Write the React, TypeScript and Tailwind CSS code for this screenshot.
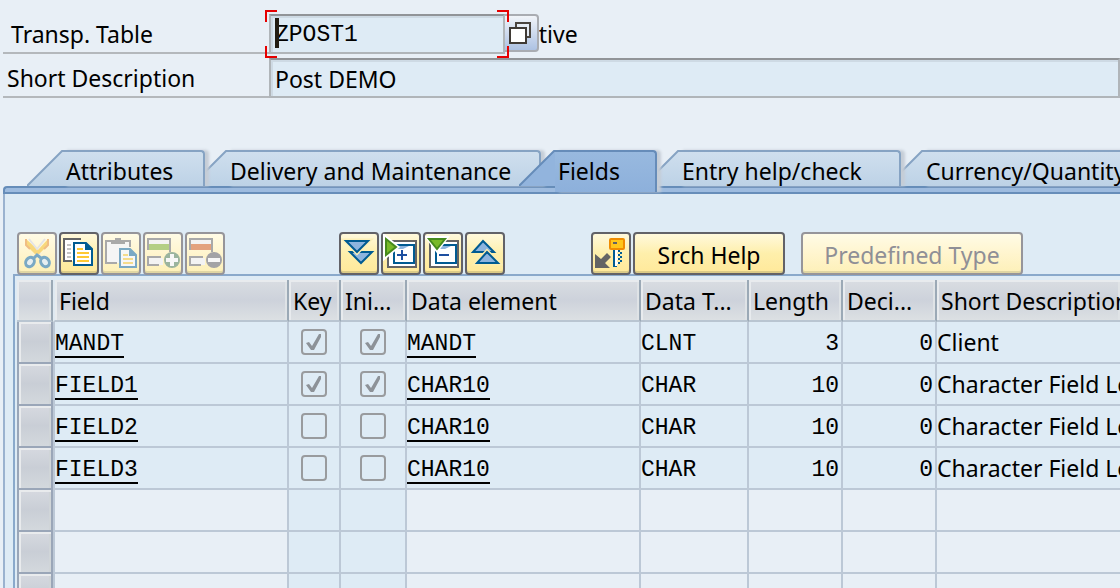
import React from 'react';
import clsx from 'clsx';

const tabs = [
  { label: 'Attributes', className: 'ml-6 z-40', width: 'w-[142px]' },
  { label: 'Delivery and Maintenance', className: '-ml-[14px] z-30', width: 'w-[314px]' },
  { label: 'Fields', className: '-ml-[22px] z-50', width: 'w-[102px]', active: true },
  { label: 'Entry help/check', className: '-ml-[14px] z-20', width: 'w-[222px]' },
  { label: 'Currency/Quantity', className: '-ml-[14px] z-10', width: 'w-[314px]' },
];

const columns = [
  { label: 'Field', width: 'w-[236px]' },
  { label: 'Key', width: 'w-[52px]' },
  { label: 'Ini...', width: 'w-[66px]' },
  { label: 'Data element', width: 'w-[234px]' },
  { label: 'Data T...', width: 'w-[108px]' },
  { label: 'Length', width: 'w-[94px]' },
  { label: 'Deci...', width: 'w-[94px]' },
  { label: 'Short Description', width: '' },
];

const rows = [
  { field: 'MANDT', key: true, element: 'MANDT', type: 'CLNT', length: 3, decimals: 0, desc: 'Client' },
  { field: 'FIELD1', key: true, element: 'CHAR10', type: 'CHAR', length: 10, decimals: 0, desc: 'Character Field Le' },
  { field: 'FIELD2', key: false, element: 'CHAR10', type: 'CHAR', length: 10, decimals: 0, desc: 'Character Field Le' },
  { field: 'FIELD3', key: false, element: 'CHAR10', type: 'CHAR', length: 10, decimals: 0, desc: 'Character Field Le' },
];

const MONO = "font-['Liberation_Mono',monospace] leading-6";

const Icon: React.FC<{ children: React.ReactNode }> = ({ children }) => (
  <svg viewBox="2 2 36 39" className="w-9 h-[39px] block" fill="none" aria-hidden="true">
    {children}
  </svg>
);

const CutIcon = () => (
  <Icon>
    <path d="M18 21l3-4 3 4-3 4z" fill="#e9e9ec" />
    <path d="M9 7v6l9 9h4l9-9V7l-10 11z" fill="#f8d87c" />
    <path d="M9 7v6l4 4M31 7v6l-4 4" stroke="#f0bd84" strokeWidth="2" />
    <path d="M12 7l8 10 8-10" stroke="#e4e4e6" strokeWidth="2" />
    <path d="M17 26l3-3 4 3" stroke="#7aa9c4" strokeWidth="3" />
    <ellipse cx="13" cy="30" rx="4" ry="5" transform="rotate(35 13 30)" fill="#e6eef1" stroke="#7aa9c4" strokeWidth="3" />
    <ellipse cx="28" cy="30" rx="4" ry="5" transform="rotate(-35 28 30)" fill="#e6eef1" stroke="#7aa9c4" strokeWidth="3" />
  </Icon>
);

const CopyIcon = () => (
  <Icon>
    <path d="M5 7h16v22H5z" fill="#fff" />
    <path d="M22 7H5v22h8" stroke="#646464" strokeWidth="2" />
    <path d="M8 13h4M8 17h4M8 21h4M8 25h4" stroke="#c4c4c4" strokeWidth="2" />
    <path d="M15 11h12l6 6v16H15z" fill="#fff" stroke="#005b92" strokeWidth="2" />
    <path d="M26 10l8 8h-8z" fill="#005b92" />
    <path d="M18 17h6M18 21h12M18 25h12M18 29h12" stroke="#ffc933" strokeWidth="2" />
  </Icon>
);

const PasteIcon = () => (
  <Icon>
    <path d="M5 9h24v22H5z" fill="#f5f5f5" />
    <path d="M16 31H5V9h24v6" stroke="#a9a9a9" strokeWidth="2" />
    <path d="M10 8h4V6h6v2h4v4H10z" fill="#a9a9a9" />
    <path d="M19 17h10l6 6v12H19z" fill="#f7f7f7" stroke="#7aa9c4" strokeWidth="2" />
    <path d="M28 16l8 8h-8z" fill="#7aa9c4" />
    <path d="M22 23h5M22 27h10M22 31h10" stroke="#f5dc8c" strokeWidth="2" />
  </Icon>
);

const RowIcon: React.FC<{ remove?: boolean }> = ({ remove }) => (
  <Icon>
    <path d="M5 7h22v10H5zM5 26h15v7H5z" fill="#f3f3f3" />
    <path d="M5 34V25h13M5 18V7h22v13M5 33h11" stroke="#a9a9a9" strokeWidth="2" />
    <path d="M6 12h20v6H6z" fill={remove ? '#e3a27f' : '#b4cf86'} />
    <circle cx="29" cy="28" r="8" fill={remove ? '#a3a3a6' : '#9bb49e'} />
    <path d={remove ? 'M23 28h12' : 'M23 28h12M29 22v12'} stroke="#f7f7f7" strokeWidth="4" />
  </Icon>
);

const DownIcon = () => (
  <Icon>
    <path d="M11 20h22L22 31z" fill="#8db4de" stroke="#005b92" strokeWidth="2" />
    <path d="M7 9h22L18 20z" fill="#8db4de" stroke="#fdf0b8" strokeWidth="5" />
    <path d="M7 9h22L18 20z" fill="#8db4de" stroke="#005b92" strokeWidth="2" />
  </Icon>
);

const UpIcon = () => (
  <Icon>
    <path d="M8 20h21L18 9z" fill="#8db4de" stroke="#005b92" strokeWidth="2" />
    <path d="M12 31h21L22 20z" fill="#8db4de" stroke="#fdeeb0" strokeWidth="5" />
    <path d="M12 31h21L22 20z" fill="#8db4de" stroke="#005b92" strokeWidth="2" />
  </Icon>
);

const NodeIcon: React.FC<{ collapse?: boolean }> = ({ collapse }) => (
  <Icon>
    <path d="M7 9h28v26H7z" fill="#fff" stroke="#646464" strokeWidth="2" />
    <path d="M13 13h20v18H13z" fill="#fff" stroke="#005b92" strokeWidth="2" />
    <path d="M14 14h14l-6 3h-8z" fill="#8db4de" />
    <path d={collapse ? 'M16 23h10' : 'M16 23h10M21 18v10'} stroke="#1d4fa0" strokeWidth="2" />
    {collapse ? (
      <path d="M5 6h18l-9 12z" fill="#79b928" stroke="#fff" strokeWidth="4" />
    ) : (
      <path d="M4 5v20l12-10z" fill="#79b928" stroke="#fff" strokeWidth="4" />
    )}
    {collapse ? (
      <path d="M6 7h16l-8 10z" fill="#79b928" stroke="#468a1c" strokeWidth="2" />
    ) : (
      <path d="M5 7v16l10-8z" fill="#79b928" stroke="#468a1c" strokeWidth="2" />
    )}
  </Icon>
);

const KeyIcon = () => (
  <Icon>
    <path d="M4 22v14h15l-5-5 6-6-4-4-6 6z" fill="#646464" />
    <path d="M22 18h4v17h-4z" fill="#005b92" />
    <path d="M24 18h4v2h-2v2h2v2h-2v2h2v2h-2v2h2v2h-2v2h-2z" fill="#fff" />
    <path d="M28 18v2M30 20v2M28 22v2M30 24v2M28 26v2M30 28v2M28 30v2" stroke="#005b92" strokeWidth="2" />
    <rect x="19" y="7" width="14" height="10" rx="1" fill="#ffc61a" stroke="#f08c00" strokeWidth="2" />
    <path d="M22 11h4" stroke="#646464" strokeWidth="2" />
  </Icon>
);

const ToolButton: React.FC<{ label: string; disabled?: boolean; className?: string; children: React.ReactNode }> = ({
  label,
  disabled,
  className,
  children,
}) => (
  <button
    type="button"
    aria-label={label}
    disabled={disabled}
    className={clsx(
      'h-[43px] shrink-0 border-2 rounded bg-linear-to-b whitespace-nowrap',
      disabled
        ? 'border-[#96959a] text-[#8f8f96] from-[#fffbe6] via-[#fff5ce] to-[#fdf0b8] shadow-[inset_0_-2px_0_#e0d6a4]'
        : 'border-[#626268] text-black from-[#fff9dc] via-[#feefab] to-[#ffe99a] shadow-[inset_0_-2px_0_#dbcb88]',
      className ?? 'w-10'
    )}
  >
    {children}
  </button>
);

const Check: React.FC<{ label: string; checked: boolean }> = ({ label, checked }) => (
  <span className="relative block size-[26px] mx-auto">
    <input
      type="checkbox"
      aria-label={label}
      checked={checked}
      disabled
      className="appearance-none block size-[26px] border-2 border-[#999b9e] rounded bg-[#deebf5]"
    />
    {checked && (
      <svg viewBox="0 0 26 26" className="absolute inset-0 size-[26px]" aria-hidden="true">
        <path d="M5 14l3-1 3 4 7-12h2v3l-7 13h-3z" fill="#8d9298" />
      </svg>
    )}
  </span>
);

const HeadCell: React.FC<{ children?: React.ReactNode; className?: string }> = ({ children, className }) => (
  <th
    scope="col"
    className={clsx(
      'h-[42px] p-0 pt-0.5 pl-1 font-normal text-left whitespace-nowrap overflow-hidden border-b-2 border-b-[#b9c5d1] border-r-2 border-r-[#9ba9b6] last:border-r-0 bg-linear-to-b from-[#d9dde2] via-[#cdd2db] to-[#dce0e3] shadow-[inset_2px_2px_0_#e8ebee,inset_-2px_0_0_#dfe3e6]',
      className
    )}
  >
    {children}
  </th>
);

const RowSelector = () => (
  <td className="h-[42px] p-0 border-x-2 border-b-2 border-[#9aa6b8] bg-linear-to-b from-[#d6d9e0] via-[#c9ced6] to-[#d3d8dd] shadow-[inset_2px_2px_0_#e9ebed,inset_-2px_0_0_#d0d5d8]" />
);

const CELL = 'h-[42px] p-0 border-r-2 last:border-r-0 border-b-2 border-[#bcc8d6] whitespace-nowrap overflow-hidden';

const Corner: React.FC<{ className: string }> = ({ className }) => (
  <span className={clsx('absolute z-10 size-3 border-[#e60000]', className)} />
);

const App: React.FC = () => {
  return (
    <div className="h-screen overflow-hidden flex flex-col bg-[#e8eff6] text-black text-[23px] leading-[30px] font-['Noto_Sans',sans-serif]">
      <form className="pt-3.5 pl-[3px] shrink-0">
        <div className="flex h-10">
          <label htmlFor="table" className="w-[266px] shrink-0 pl-2 pt-[5px] border-b-2 border-[#b4b8bc]">
            Transp. Table
          </label>
          <div className="relative w-[236px] shrink-0">
            <input
              id="table"
              defaultValue="ZPOST1"
              className={clsx(
                'w-full h-10 pl-1 pt-0.5 border-2 border-[#b0b5b9] border-t-[#919498] bg-[#deebf5] outline-none shadow-[inset_2px_2px_0_#cedae4]',
                "font-['Liberation_Mono',monospace]"
              )}
            />
            <span className="absolute left-1.5 top-1 w-1 h-[30px] bg-[#221c12]" />
            <Corner className="-left-1 -top-1 border-t-2 border-l-2" />
            <Corner className="-right-1 -top-1 border-t-2 border-r-2" />
            <Corner className="-left-1 -bottom-1 border-b-2 border-l-2" />
            <Corner className="-right-1 -bottom-1 border-b-2 border-r-2" />
          </div>
          <div className="relative pl-2 pt-[5px]">
            <span>Active</span>
            <button
              type="button"
              aria-label="Possible entries"
              className="absolute left-0 top-0 w-[34px] h-[38px] border-2 border-l-0 border-[#a9acb2] rounded-r bg-linear-to-b from-[#f1f4f9] to-[#adc2e3]"
            >
              <svg viewBox="0 0 32 34" className="w-8 h-[34px]" aria-hidden="true">
                <path d="M11 7h14v14H11z" fill="#e6ecf5" stroke="#4a453f" strokeWidth="2" />
                <path d="M5 12h16v15H5z" fill="#fff" stroke="#3f3a35" strokeWidth="2" />
              </svg>
            </button>
          </div>
        </div>
        <div className="flex h-10 mt-1">
          <label htmlFor="description" className="w-[266px] shrink-0 pl-1 pt-[5px] border-b-2 border-[#b4b8bc]">
            Short Description
          </label>
          <input
            id="description"
            defaultValue="Post DEMO"
            className="min-w-0 flex-1 pl-1 pt-0.5 border-2 border-[#b0b5b9] border-t-[#919498] bg-[#deebf5] outline-none shadow-[inset_2px_2px_0_#cedae4]"
          />
        </div>
      </form>

      <div className="mt-[52px] pl-[3px] flex-1 min-h-0 flex flex-col">
        <div role="tablist" className="relative z-10 h-9 flex items-start shrink-0">
          {tabs.map((tab) => (
            <button
              key={tab.label}
              type="button"
              role="tab"
              aria-selected={!!tab.active}
              className={clsx('relative flex shrink-0', tab.className)}
            >
              <svg viewBox="0 0 36 36" className="size-9 shrink-0" aria-hidden="true">
                <defs>
                  <linearGradient id="slope" x1="0" y1="0" x2="0" y2="1">
                    <stop offset="0" stopColor="#cfdfee" />
                    <stop offset="1" stopColor="#bdd2e6" />
                  </linearGradient>
                </defs>
                <path d="M0 36L35 1h1v35z" fill={tab.active ? '#92b4dd' : 'url(#slope)'} />
                <path d="M0 36L35 1h1" fill="none" stroke={tab.active ? '#668cb9' : '#86a3c3'} strokeWidth="2" />
              </svg>
              <span
                className={clsx(
                  'border-t-2 border-r-2 rounded-tr pl-[3px] pt-1 text-left whitespace-nowrap',
                  tab.active
                    ? 'h-[42px] border-[#668cb9] bg-linear-to-b from-[#98b9df] to-[#8db0db] shadow-[4px_0_3px_#c5cdd6]'
                    : 'h-9 border-[#86a3c3] bg-linear-to-b from-[#cfdfee] to-[#bdd2e6] shadow-[4px_0_3px_#c5cdd6]',
                  tab.width
                )}
              >
                {tab.label}
              </span>
            </button>
          ))}
        </div>
        <div className="h-2 shrink-0 border-y-2 border-l-2 border-[#668db9] bg-[#9dbbdf] rounded-tl" />

        <div className="flex-1 min-h-0 border-l-2 border-[#9ab2cf] bg-[#deebf5] pt-[38px] pl-2">
          <div className="flex h-[42px] pl-1">
            <div className="flex gap-0.5">
              <ToolButton label="Cut" disabled><CutIcon /></ToolButton>
              <ToolButton label="Copy"><CopyIcon /></ToolButton>
              <ToolButton label="Paste" disabled><PasteIcon /></ToolButton>
              <ToolButton label="Insert row" disabled><RowIcon /></ToolButton>
              <ToolButton label="Delete row" disabled><RowIcon remove /></ToolButton>
            </div>
            <div className="flex gap-0.5 ml-[114px]">
              <ToolButton label="Expand all"><DownIcon /></ToolButton>
              <ToolButton label="Expand include"><NodeIcon /></ToolButton>
              <ToolButton label="Collapse include"><NodeIcon collapse /></ToolButton>
              <ToolButton label="Collapse all"><UpIcon /></ToolButton>
            </div>
            <div className="flex gap-0.5 ml-[86px]">
              <ToolButton label="Foreign keys"><KeyIcon /></ToolButton>
              <ToolButton label="Srch Help" className="w-[152px] pt-0.5">Srch Help</ToolButton>
            </div>
            <div className="flex ml-4">
              <ToolButton label="Predefined Type" disabled className="w-[222px] pt-0.5">Predefined Type</ToolButton>
            </div>
          </div>

          <div className="border-t-2 border-l-2 border-[#8aa9cb] pt-1 pl-0.5">
            <table className="w-full table-fixed border-separate border-spacing-0">
              <colgroup>
                <col className="w-9" />
                {columns.map((c) => (
                  <col key={c.label} className={c.width} />
                ))}
              </colgroup>
              <thead>
                <tr>
                  <HeadCell className="border-b-[#9ba9b6]" />
                  {columns.map((c, idx) => (
                    <HeadCell key={c.label} className={idx === 0 ? 'border-l-2 border-l-[#dfe9f1]' : ''}>
                      {c.label}
                    </HeadCell>
                  ))}
                </tr>
              </thead>
              <tbody>
                {rows.map((row) => (
                  <tr key={row.field}>
                    <RowSelector />
                    <td className={clsx(CELL, 'border-l-2 align-bottom pb-1')}>
                      <a href="#" className={clsx(MONO, 'block w-fit border-b-2 border-black')}>{row.field}</a>
                    </td>
                    <td className={CELL}><Check label={`${row.field} key`} checked={row.key} /></td>
                    <td className={CELL}><Check label={`${row.field} initial value`} checked={row.key} /></td>
                    <td className={clsx(CELL, 'align-bottom pb-1')}>
                      <a href="#" className={clsx(MONO, 'block w-fit border-b-2 border-black')}>{row.element}</a>
                    </td>
                    <td className={clsx(CELL, MONO, 'align-bottom pb-1.5')}>{row.type}</td>
                    <td className={clsx(CELL, MONO, 'align-bottom pb-1.5 pr-0.5 text-right')}>{row.length}</td>
                    <td className={clsx(CELL, MONO, 'align-bottom pb-1.5 pr-0.5 text-right')}>{row.decimals}</td>
                    <td className={CELL}>{row.desc}</td>
                  </tr>
                ))}
                {[5, 6, 7].map((n) => (
                  <tr key={n}>
                    <RowSelector />
                    {columns.map((c, idx) => (
                      <td
                        key={c.label}
                        className={clsx(CELL, idx === 0 && 'border-l-2', idx === 1 || idx === 2 ? 'bg-[#deebf5]' : 'bg-[#e8eff6]')}
                      />
                    ))}
                  </tr>
                ))}
              </tbody>
            </table>
          </div>
        </div>
      </div>
    </div>
  );
};

export default App;
